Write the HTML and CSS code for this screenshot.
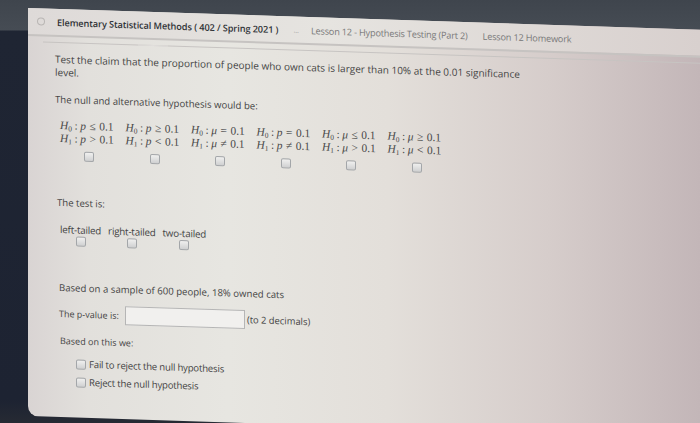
FILE: index.html
```html
<!DOCTYPE html>
<html>
<head>
<meta charset="utf-8">
<link rel="stylesheet" href="styles.css">
</head>
<body>
<div class="screen">
  <header class="topbar">
    <span class="home-icon"></span>
    <span class="course">Elementary Statistical Methods ( 402 / Spring 2021 )</span>
    <span class="dots">...</span>
    <span class="crumb">Lesson 12 - Hypothesis Testing (Part 2)</span>
    <span class="crumb last">Lesson 12 Homework</span>
  </header>
  <div class="band"></div>
  <div class="rule"><span class="rule-seg"></span></div>
  <main class="content">
    <p class="question">Test the claim that the proportion of people who own cats is larger than 10% at the 0.01 significance level.</p>
    <p class="prompt">The null and alternative hypothesis would be:</p>
    <div class="hyps">
      <div class="hyp">
        <div class="math"><i>H</i><sub>0</sub><span class="colon">:</span><i>p</i><span class="rel">≤</span>0.1</div>
        <div class="math"><i>H</i><sub>1</sub><span class="colon">:</span><i>p</i><span class="rel">&gt;</span>0.1</div>
        <span class="cb"></span>
      </div>
      <div class="hyp">
        <div class="math"><i>H</i><sub>0</sub><span class="colon">:</span><i>p</i><span class="rel">≥</span>0.1</div>
        <div class="math"><i>H</i><sub>1</sub><span class="colon">:</span><i>p</i><span class="rel">&lt;</span>0.1</div>
        <span class="cb"></span>
      </div>
      <div class="hyp">
        <div class="math"><i>H</i><sub>0</sub><span class="colon">:</span><i>μ</i><span class="rel">=</span>0.1</div>
        <div class="math"><i>H</i><sub>1</sub><span class="colon">:</span><i>μ</i><span class="rel">≠</span>0.1</div>
        <span class="cb"></span>
      </div>
      <div class="hyp">
        <div class="math"><i>H</i><sub>0</sub><span class="colon">:</span><i>p</i><span class="rel">=</span>0.1</div>
        <div class="math"><i>H</i><sub>1</sub><span class="colon">:</span><i>p</i><span class="rel">≠</span>0.1</div>
        <span class="cb"></span>
      </div>
      <div class="hyp">
        <div class="math"><i>H</i><sub>0</sub><span class="colon">:</span><i>μ</i><span class="rel">≤</span>0.1</div>
        <div class="math"><i>H</i><sub>1</sub><span class="colon">:</span><i>μ</i><span class="rel">&gt;</span>0.1</div>
        <span class="cb"></span>
      </div>
      <div class="hyp">
        <div class="math"><i>H</i><sub>0</sub><span class="colon">:</span><i>μ</i><span class="rel">≥</span>0.1</div>
        <div class="math"><i>H</i><sub>1</sub><span class="colon">:</span><i>μ</i><span class="rel">&lt;</span>0.1</div>
        <span class="cb"></span>
      </div>
    </div>
    <p class="prompt test">The test is:</p>
    <div class="tails">
      <div class="tail"><span class="tail-label">left-tailed</span><span class="cb"></span></div>
      <div class="tail"><span class="tail-label">right-tailed</span><span class="cb"></span></div>
      <div class="tail"><span class="tail-label">two-tailed</span><span class="cb"></span></div>
    </div>
    <p class="prompt sample">Based on a sample of 600 people, 18% owned cats</p>
    <div class="pvalue">
      <span>The p-value is:</span>
      <span class="input"></span>
      <span class="hint">(to 2 decimals)</span>
    </div>
    <p class="prompt based">Based on this we:</p>
    <div class="choices">
      <div class="choice"><span class="cb"></span><span>Fail to reject the null hypothesis</span></div>
      <div class="choice second"><span class="cb"></span><span>Reject the null hypothesis</span></div>
    </div>
  </main>
</div>
</body>
</html>
```
FILE: styles.css
```css
html, body {
  margin: 0;
  padding: 0;
}
body {
  width: 700px;
  height: 423px;
  overflow: hidden;
  background: linear-gradient(180deg, #3f454d 0px, #464c54 30px, #1f2533 31px, #1d2332 400px, #262a33 423px);
  font-family: "Open Sans", "Liberation Sans", sans-serif;
  color: #444;
}
.screen {
  margin: 8px 0 0 28px;
  width: 690px;
  height: 408px;
  border-bottom-left-radius: 10px;
  background: linear-gradient(90deg, #d9d4d3 0px, #e2e0dc 60px, #e7e6e1 200px, #e3dfda 360px, #d6cdcb 520px, #c3b6b8 672px);
  transform: skewY(1.85deg);
  transform-origin: 0 0;
}
.topbar {
  height: 16px;
  padding: 5px 0 5px 9px;
  display: flex;
  align-items: center;
  font-size: 9.2px;
  background: linear-gradient(90deg, #dedad8, #e6e4e0 300px, #d8d0ce 672px);
}
.home-icon {
  width: 6px;
  height: 6px;
  border: 1.5px solid #b9b6b4;
  border-radius: 50%;
  margin-right: 12px;
}
.course {
  font-weight: 600;
  color: #2f3236;
  letter-spacing: -0.1px;
}
.dots {
  color: #9a9a9a;
  margin-left: 15px;
  margin-right: 12px;
  font-size: 7px;
}
.crumb {
  color: #7a7a7a;
  font-size: 9.2px;
  letter-spacing: -0.2px;
}
.crumb.last {
  margin-left: 15px;
}
.band {
  height: 2px;
  background: #c6c3c1;
}
.rule {
  margin: 5px 0 0 15px;
  height: 1px;
  background: #c7c4c2;
  display: flex;
}
.rule-seg {
  margin-left: 95px;
  width: 30px;
  background: #e0dedb;
}
.content {
  padding: 0 0 0 27px;
  font-size: 9.6px;
  line-height: 13px;
}
p {
  margin: 0;
}
.question {
  margin-top: 10px;
  width: 470px;
  font-size: 10px;
}
.prompt {
  margin-top: 14px;
}
.hyps {
  display: grid;
  grid-template-columns: repeat(6, 65.5px);
  margin: 13px 0 0 5px;
}
.hyp {
  display: flex;
  flex-direction: column;
  align-items: flex-start;
}
.math {
  font-family: "Liberation Serif", "DejaVu Serif", serif;
  font-size: 11.4px;
  line-height: 13px;
  color: #4a4a4a;
  white-space: nowrap;
}
.math sub {
  font-size: 7.5px;
  vertical-align: -2px;
  line-height: 0;
}
.colon {
  padding: 0 2.5px;
}
.rel {
  padding: 0 3.6px;
}
.hyp .cb {
  margin: 6px 0 0 24px;
}
.cb {
  display: block;
  width: 8px;
  height: 8px;
  border: 1px solid #a3a6a9;
  border-radius: 2px;
  background: linear-gradient(180deg, #f0f0ef, #cfd0d1);
  flex: none;
}
.prompt.test {
  margin-top: 35px;
  margin-left: 2px;
}
.tails {
  display: flex;
  gap: 7px;
  margin: 14px 0 0 5px;
}
.tail {
  display: flex;
  flex-direction: column;
  align-items: center;
}
.tail-label {
  font-size: 9.8px;
  letter-spacing: -0.2px;
}
.prompt.sample {
  margin-top: 35px;
  margin-left: 4px;
}
.pvalue {
  display: flex;
  align-items: center;
  margin: 10px 0 0 4px;
  height: 19px;
}
.pvalue > span:first-child {
  font-size: 9px;
}
.input {
  width: 118px;
  height: 17px;
  margin-left: 6px;
  border: 1px solid #b5b5b5;
  background: #f1f0ee;
}
.hint {
  margin-left: 2px;
  font-size: 9.4px;
}
.prompt.based {
  margin-top: 11px;
  margin-left: 5px;
  font-size: 9px;
}
.choices {
  margin: 10px 0 0 21px;
  font-size: 9.6px;
  letter-spacing: -0.2px;
}
.choice {
  display: flex;
  align-items: center;
  gap: 3px;
}
.choice.second {
  margin-top: 5px;
}
```
